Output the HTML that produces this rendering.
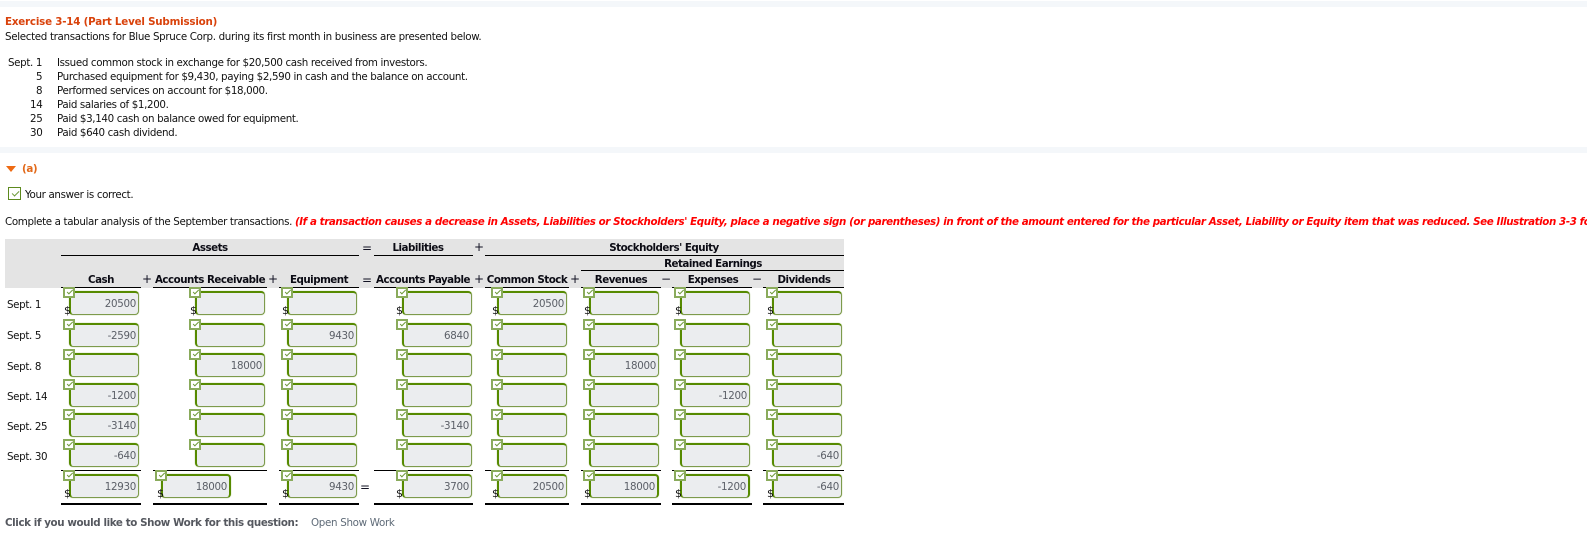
<!DOCTYPE html>
<html><head><meta charset="utf-8"><style>
html,body{margin:0;padding:0;background:#fff}
body{width:1587px;height:538px;overflow:hidden;position:relative;font:10.3px/14px "DejaVu Sans","Liberation Sans",sans-serif;color:#111;letter-spacing:-.36px;filter:blur(.3px)}
.t{position:absolute;white-space:nowrap}
.c{transform:translateX(-50%)}
.h{font-weight:bold;color:#0b0b14;letter-spacing:-.5px}
.o{font-size:12px;letter-spacing:0;color:#112}
.l{position:absolute;background:#000;height:1px}
.band{position:absolute;left:0;width:1587px;background:#f4f7fa}
.r{position:absolute;left:0;top:0;width:0;height:0}
.b{position:absolute;width:70px;height:24px;box-sizing:border-box;background:#ebedef;border:1px solid #7d9a4c;border-left:2px solid #568a00;border-top:2px solid #568a00;border-radius:4px;box-shadow:0 0 1px rgba(86,138,0,.6);text-align:right;padding-right:2px;font-style:normal;color:#5c6068;line-height:22px;letter-spacing:-.31px}
.b:nth-child(1){left:69px}.b:nth-child(2){left:195px}.b:nth-child(3){left:287px}.b:nth-child(4){left:402px}.b:nth-child(5){left:497px}.b:nth-child(6){left:589px}.b:nth-child(7){left:680px}.b:nth-child(8){left:772px}
.b u{position:absolute;left:-8px;top:-6px;width:8px;height:7px;border:2px solid #8aab5c;background:#fff;display:block}
.b u::after{content:"";position:absolute;left:1.5px;top:.5px;width:4.5px;height:2px;border-left:1.6px solid #6f9a3a;border-bottom:1.6px solid #6f9a3a;transform:rotate(-45deg)}
.b.x{left:161px!important}
.b.z{border-right:2px solid #568a00}
.d{position:absolute;font-size:11px;line-height:10px;color:#111;letter-spacing:0}
</style></head><body>
<div class="band" style="top:1px;height:6px"></div>
<div class="band" style="top:147px;height:6px"></div>

<div class="t" style="left:5px;top:15px;font-weight:bold;color:#d9420b;letter-spacing:-.2px">Exercise 3-14 (Part Level Submission)</div>
<div class="t" style="left:5px;top:30px;letter-spacing:-.33px">Selected transactions for Blue Spruce Corp. during its first month in business are presented below.</div>

<div class="t" style="left:8px;top:56px">Sept. 1</div>
<div class="t" style="left:36px;top:70px">5</div>
<div class="t" style="left:36px;top:84px">8</div>
<div class="t" style="left:30px;top:98px">14</div>
<div class="t" style="left:30px;top:112px">25</div>
<div class="t" style="left:30px;top:126px">30</div>
<div class="t" style="left:57px;top:56px">Issued common stock in exchange for $20,500 cash received from investors.</div>
<div class="t" style="left:57px;top:70px">Purchased equipment for $9,430, paying $2,590 in cash and the balance on account.</div>
<div class="t" style="left:57px;top:84px">Performed services on account for $18,000.</div>
<div class="t" style="left:57px;top:98px">Paid salaries of $1,200.</div>
<div class="t" style="left:57px;top:112px">Paid $3,140 cash on balance owed for equipment.</div>
<div class="t" style="left:57px;top:126px">Paid $640 cash dividend.</div>

<div style="position:absolute;left:6px;top:166px;width:0;height:0;border-left:5.5px solid transparent;border-right:5.5px solid transparent;border-top:6px solid #ee6a12"></div>
<div class="t" style="left:22px;top:162px;font-weight:bold;color:#e2691a">(a)</div>
<div style="position:absolute;left:8px;top:187px;width:11px;height:11px;border:1px solid #5d8a1e;background:#fff"><div style="position:absolute;left:2.5px;top:2.5px;width:5.5px;height:2.5px;border-left:1.6px solid #6f9a3a;border-bottom:1.6px solid #6f9a3a;transform:rotate(-45deg)"></div></div>
<div class="t" style="left:25px;top:188px">Your answer is correct.</div>

<div class="t" style="left:5px;top:215px;width:1582px;overflow:hidden">Complete a tabular analysis of the September transactions. <b style="color:#f00;font-style:italic;letter-spacing:-.4px">(If a transaction causes a decrease in Assets, Liabilities or Stockholders' Equity, place a negative sign (or parentheses) in front of the amount entered for the particular Asset, Liability or Equity item that was reduced. See Illustration 3-3 for the format.)</b></div>

<div style="position:absolute;left:5px;top:239px;width:839px;height:49px;background:#e4e4e4"></div>

<div class="l" style="left:61px;top:255px;width:298px"></div>
<div class="l" style="left:374px;top:255px;width:99px"></div>
<div class="l" style="left:485px;top:255px;width:359px"></div>
<div class="l" style="left:581px;top:270px;width:263px"></div>
<div class="l" style="left:61px;top:287px;width:80px"></div>
<div class="l" style="left:153px;top:287px;width:114px"></div>
<div class="l" style="left:279px;top:287px;width:80px"></div>
<div class="l" style="left:374px;top:287px;width:99px"></div>
<div class="l" style="left:485px;top:287px;width:84px"></div>
<div class="l" style="left:581px;top:287px;width:80px"></div>
<div class="l" style="left:672px;top:287px;width:80px"></div>
<div class="l" style="left:763px;top:287px;width:81px"></div>

<div class="t c h" style="left:210px;top:241px">Assets</div>
<div class="t c h" style="left:418px;top:241px">Liabilities</div>
<div class="t c h" style="left:664px;top:241px">Stockholders' Equity</div>
<div class="t c h" style="left:713px;top:257px">Retained Earnings</div>
<div class="t c h" style="left:101px;top:273px">Cash</div>
<div class="t c h" style="left:210px;top:273px">Accounts Receivable</div>
<div class="t c h" style="left:319px;top:273px">Equipment</div>
<div class="t c h" style="left:423px;top:273px">Accounts Payable</div>
<div class="t c h" style="left:527px;top:273px">Common Stock</div>
<div class="t c h" style="left:621px;top:273px">Revenues</div>
<div class="t c h" style="left:713px;top:273px">Expenses</div>
<div class="t c h" style="left:804px;top:273px">Dividends</div>

<div class="t c o" style="left:367px;top:241px">=</div>
<div class="t c o" style="left:479px;top:240px">+</div>
<div class="t c o" style="left:147px;top:272px">+</div>
<div class="t c o" style="left:273px;top:272px">+</div>
<div class="t c o" style="left:367px;top:273px">=</div>
<div class="t c o" style="left:479px;top:272px">+</div>
<div class="t c o" style="left:575px;top:272px">+</div>
<div class="t c o" style="left:666px;top:272px">−</div>
<div class="t c o" style="left:757px;top:272px">−</div>

<div class="t" style="left:7px;top:298px">Sept. 1</div>
<div class="t" style="left:7px;top:329px">Sept. 5</div>
<div class="t" style="left:7px;top:360px">Sept. 8</div>
<div class="t" style="left:7px;top:390px">Sept. 14</div>
<div class="t" style="left:7px;top:420px">Sept. 25</div>
<div class="t" style="left:7px;top:450px">Sept. 30</div>

<div class="r" style="top:291px"><i class="b"><u></u>20500</i><i class="b"><u></u></i><i class="b"><u></u></i><i class="b"><u></u></i><i class="b"><u></u>20500</i><i class="b"><u></u></i><i class="b"><u></u></i><i class="b"><u></u></i></div>
<div class="r" style="top:323px"><i class="b"><u></u>-2590</i><i class="b"><u></u></i><i class="b"><u></u>9430</i><i class="b"><u></u>6840</i><i class="b"><u></u></i><i class="b"><u></u></i><i class="b"><u></u></i><i class="b"><u></u></i></div>
<div class="r" style="top:353px"><i class="b"><u></u></i><i class="b"><u></u>18000</i><i class="b"><u></u></i><i class="b"><u></u></i><i class="b"><u></u></i><i class="b"><u></u>18000</i><i class="b"><u></u></i><i class="b"><u></u></i></div>
<div class="r" style="top:383px"><i class="b"><u></u>-1200</i><i class="b"><u></u></i><i class="b"><u></u></i><i class="b"><u></u></i><i class="b"><u></u></i><i class="b"><u></u></i><i class="b"><u></u>-1200</i><i class="b"><u></u></i></div>
<div class="r" style="top:413px"><i class="b"><u></u>-3140</i><i class="b"><u></u></i><i class="b"><u></u></i><i class="b"><u></u>-3140</i><i class="b"><u></u></i><i class="b"><u></u></i><i class="b"><u></u></i><i class="b"><u></u></i></div>
<div class="r" style="top:443px"><i class="b"><u></u>-640</i><i class="b"><u></u></i><i class="b"><u></u></i><i class="b"><u></u></i><i class="b"><u></u></i><i class="b"><u></u></i><i class="b"><u></u></i><i class="b"><u></u>-640</i></div>

<div class="l" style="left:61px;top:470px;width:80px"></div>
<div class="l" style="left:153px;top:470px;width:114px"></div>
<div class="l" style="left:279px;top:470px;width:80px"></div>
<div class="l" style="left:374px;top:470px;width:99px"></div>
<div class="l" style="left:485px;top:470px;width:84px"></div>
<div class="l" style="left:581px;top:470px;width:80px"></div>
<div class="l" style="left:672px;top:470px;width:80px"></div>
<div class="l" style="left:763px;top:470px;width:81px"></div>
<div class="l" style="left:61px;top:503px;width:80px;height:2px"></div>
<div class="l" style="left:153px;top:503px;width:114px;height:2px"></div>
<div class="l" style="left:279px;top:503px;width:80px;height:2px"></div>
<div class="l" style="left:374px;top:503px;width:99px;height:2px"></div>
<div class="l" style="left:485px;top:503px;width:84px;height:2px"></div>
<div class="l" style="left:581px;top:503px;width:80px;height:2px"></div>
<div class="l" style="left:672px;top:503px;width:80px;height:2px"></div>
<div class="l" style="left:763px;top:503px;width:81px;height:2px"></div>

<div class="r" style="top:474px"><i class="b"><u></u>12930</i><i class="b x z"><u></u>18000</i><i class="b"><u></u>9430</i><i class="b"><u></u>3700</i><i class="b"><u></u>20500</i><i class="b z"><u></u>18000</i><i class="b z"><u></u>-1200</i><i class="b"><u></u>-640</i></div>
<div class="t c o" style="left:365px;top:480px">=</div>

<div class="d" style="left:64px;top:306px">$</div>
<div class="d" style="left:190px;top:306px">$</div>
<div class="d" style="left:282px;top:306px">$</div>
<div class="d" style="left:396px;top:306px">$</div>
<div class="d" style="left:492px;top:306px">$</div>
<div class="d" style="left:584px;top:306px">$</div>
<div class="d" style="left:675px;top:306px">$</div>
<div class="d" style="left:767px;top:306px">$</div>
<div class="d" style="left:64px;top:489px">$</div>
<div class="d" style="left:157px;top:489px">$</div>
<div class="d" style="left:282px;top:489px">$</div>
<div class="d" style="left:396px;top:489px">$</div>
<div class="d" style="left:492px;top:489px">$</div>
<div class="d" style="left:584px;top:489px">$</div>
<div class="d" style="left:675px;top:489px">$</div>
<div class="d" style="left:767px;top:489px">$</div>

<div class="t" style="left:5px;top:516px;font-weight:bold;color:#55585f;letter-spacing:-.39px">Click if you would like to Show Work for this question:</div>
<div class="t" style="left:311px;top:516px;color:#5f6b78;letter-spacing:-.31px">Open Show Work</div>
</body></html>
